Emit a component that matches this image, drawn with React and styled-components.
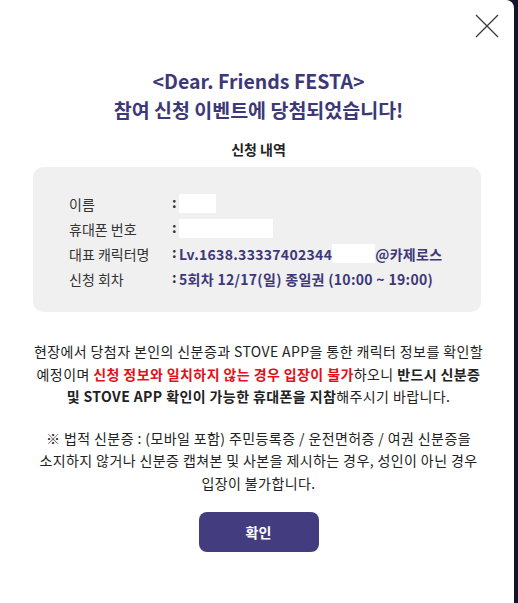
import React from 'react'
import styled, { createGlobalStyle } from 'styled-components'

const GlobalStyle = createGlobalStyle`
  html, body {
    margin: 0;
    padding: 0;
    background: #14132a;
  }
  body {
    font-family: "Noto Sans CJK KR", "Noto Sans", sans-serif;
  }
`

const rows = [
  { label: '이름', value: '', mask: 37 },
  { label: '휴대폰 번호', value: '', mask: 94 },
  { label: '대표 캐릭터명', value: 'Lv.1638.33337402344', mask: 43, tail: '@카제로스' },
  { label: '신청 회차', value: '5회차 12/17(일) 종일권 (10:00 ~ 19:00)' },
]

const App = () => {
  return (
    <>
      <GlobalStyle />
      <Modal>
        <CloseButton aria-label="닫기">
          <svg width="24" height="24" viewBox="0 0 24 24">
            <path d="M1 1 L23 23 M23 1 L1 23" stroke="#3a3a3a" strokeWidth="1.3" fill="none" />
          </svg>
        </CloseButton>

        <Title>
          &lt;Dear. Friends FESTA&gt;
          <br />
          참여 신청 이벤트에 당첨되었습니다!
        </Title>

        <SectionTitle>신청 내역</SectionTitle>

        <InfoBox>
          {rows.map((row) => (
            <InfoRow key={row.label}>
              <Label>{row.label}</Label>
              <Colon>:</Colon>
              <Value>
                {row.value}
                {row.mask && <Mask $w={row.mask} />}
                {row.tail}
              </Value>
            </InfoRow>
          ))}
        </InfoBox>

        <Notice>
          현장에서 당첨자 본인의 신분증과 STOVE APP을 통한 캐릭터 정보를 확인할
          예정이며 <Red>신청 정보와 일치하지 않는 경우 입장이 불가</Red>하오니{' '}
          <b>반드시 신분증 및 STOVE APP 확인이 가능한 휴대폰을 지참</b>해주시기 바랍니다.
        </Notice>

        <Notice $gap>
          ※ 법적 신분증 : (모바일 포함) 주민등록증 / 운전면허증 / 여권 신분증을
          소지하지 않거나 신분증 캡쳐본 및 사본을 제시하는 경우, 성인이 아닌 경우
          입장이 불가합니다.
        </Notice>

        <ConfirmButton>확인</ConfirmButton>
      </Modal>
    </>
  )
}

export default App

const Modal = styled.div`
  position: relative;
  width: 514px;
  height: 603px;
  box-sizing: border-box;
  background: #fff;
  border-top-right-radius: 8px;
  padding: 66px 30px 0 33px;
  display: flex;
  flex-direction: column;
  align-items: center;
`

const CloseButton = styled.button`
  position: absolute;
  top: 14px;
  right: 15px;
  width: 24px;
  height: 24px;
  padding: 0;
  border: none;
  background: none;
  cursor: pointer;
  svg { display: block; }
`

const Title = styled.h2`
  margin: 0;
  font-size: 19.5px;
  font-weight: 700;
  line-height: 29px;
  color: #3d3878;
  text-align: center;
`

const SectionTitle = styled.h3`
  margin: 15px 0 0;
  font-size: 14px;
  font-weight: 700;
  line-height: 20px;
  color: #222;
`

const InfoBox = styled.div`
  margin-top: 8px;
  align-self: stretch;
  width: 448px;
  box-sizing: border-box;
  background: #f0f0f0;
  border-radius: 10px;
  padding: 24px 20px 21px 36px;
  display: flex;
  flex-direction: column;
`

const InfoRow = styled.div`
  display: flex;
  align-items: center;
  height: 25px;
  font-size: 14px;
  line-height: 20px;
`

const Label = styled.span`
  width: 103px;
  color: #333;
`

const Colon = styled.span`
  width: 7px;
  color: #333;
  font-weight: 700;
  position: relative;
  top: -2px;
`

const Value = styled.span`
  display: flex;
  align-items: center;
  font-weight: 700;
  letter-spacing: 0.3px;
  color: #3d3878;
  white-space: nowrap;
`

const Mask = styled.span`
  display: inline-block;
  width: ${(p) => p.$w}px;
  height: 19px;
  background: #fff;
`

const Notice = styled.p`
  margin: ${(p) => (p.$gap ? '19px' : '28px')} 0 0;
  width: 452px;
  font-size: 14px;
  line-height: 22.5px;
  letter-spacing: 0.4px;
  color: #222;
  text-align: center;
  word-break: keep-all;

  b { font-weight: 700; }
`

const Red = styled.b`
  color: #e3101a;
`

const ConfirmButton = styled.button`
  margin-top: 18px;
  width: 120px;
  height: 40px;
  border: none;
  border-radius: 8px;
  background: #433d80;
  color: #fff;
  font-family: inherit;
  font-size: 14px;
  font-weight: 700;
  cursor: pointer;
`
